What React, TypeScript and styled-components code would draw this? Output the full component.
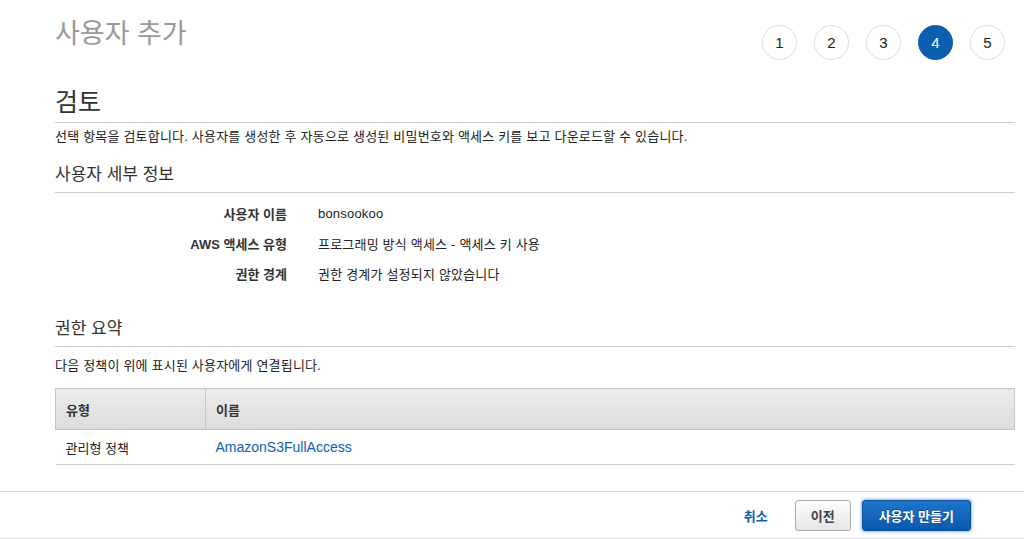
import React from 'react';
import styled, { createGlobalStyle } from 'styled-components';

const GlobalStyle = createGlobalStyle`
  html, body {
    margin: 0;
    padding: 0;
    background: #ffffff;
  }
  body {
    font-family: "Liberation Sans", "Noto Sans CJK KR", sans-serif;
    color: #222222;
    font-size: 13px;
  }
`;

const Page = styled.div`
  width: 1024px;
  display: flex;
  flex-direction: column;
`;

const Header = styled.div`
  height: 88px;
  display: flex;
  justify-content: space-between;
  align-items: flex-start;
  padding: 0 19px 0 55px;
`;

const PageTitle = styled.h1`
  margin: 18px 0 0;
  font-size: 27px;
  line-height: 32px;
  font-weight: 400;
  color: #999999;
`;

const Steps = styled.div`
  display: flex;
  gap: 17px;
  margin-top: 25px;
`;

const Step = styled.div<{ $active?: boolean }>`
  width: 35px;
  height: 35px;
  box-sizing: border-box;
  border-radius: 50%;
  border: 1px solid ${(p) => (p.$active ? '#0b5fb0' : '#dddddd')};
  background: ${(p) => (p.$active ? '#0b5fb0' : '#ffffff')};
  color: ${(p) => (p.$active ? '#ffffff' : '#222222')};
  display: flex;
  align-items: center;
  justify-content: center;
  font-size: 15px;
`;

const Content = styled.div`
  padding: 0 9px 0 55px;
  display: flex;
  flex-direction: column;
`;

const SectionTitle = styled.h2`
  margin: 0;
  font-size: 25px;
  line-height: 28px;
  font-weight: 400;
  color: #333333;
  padding-bottom: 6px;
  border-bottom: 1px solid #cccccc;
`;

const SubTitle = styled.h3<{ $top: number }>`
  margin: ${(p) => p.$top}px 0 0;
  font-size: 17px;
  line-height: 22px;
  font-weight: 400;
  color: #333333;
  padding-bottom: 6px;
  border-bottom: 1px solid #cccccc;
`;

const Description = styled.p<{ $top: number }>`
  margin: ${(p) => p.$top}px 0 0;
  font-size: 13px;
  line-height: 18px;
  color: #222222;
  letter-spacing: 0.2px;
`;

const DetailList = styled.dl`
  margin: 5px 0 0;
  display: grid;
  grid-template-columns: 232px 1fr;
  column-gap: 31px;
  grid-auto-rows: 30px;
  align-items: center;
`;

const DetailLabel = styled.dt`
  text-align: right;
  font-weight: 700;
  color: #333333;
`;

const DetailValue = styled.dd`
  margin: 0;
  color: #222222;
  letter-spacing: 0.2px;
`;

const Table = styled.table`
  margin-top: 13px;
  width: 100%;
  border-collapse: collapse;
`;

const HeadCell = styled.th<{ $width?: number }>`
  height: 41px;
  padding: 0 10px;
  text-align: left;
  font-weight: 700;
  color: #333333;
  background: linear-gradient(#ececec, #dcdcdc);
  border: 1px solid #c6c6c6;
  width: ${(p) => (p.$width ? `${p.$width}px` : 'auto')};
  box-sizing: border-box;
`;

const BodyCell = styled.td`
  height: 34px;
  padding: 0 10px;
  border-bottom: 1px solid #cccccc;
  color: #222222;
`;

const Link = styled.a`
  color: #0b62b8;
  text-decoration: none;
  font-size: 14px;
`;

const Footer = styled.div`
  margin-top: 26px;
  height: 46px;
  border-top: 1px solid #dddddd;
  border-bottom: 1px solid #dddddd;
  display: flex;
  align-items: center;
  justify-content: flex-end;
  padding-right: 53px;
`;

const CancelLink = styled.a`
  color: #0b5fae;
  font-weight: 700;
  font-size: 13px;
  margin-right: 27px;
`;

const Button = styled.button<{ $primary?: boolean }>`
  height: 31px;
  box-sizing: border-box;
  padding: 0 ${(p) => (p.$primary ? '16px' : '15px')};
  margin-left: ${(p) => (p.$primary ? '11px' : '0')};
  border-radius: 3px;
  font-family: "Liberation Sans", "Noto Sans CJK KR", sans-serif;
  font-size: 13px;
  font-weight: 700;
  color: ${(p) => (p.$primary ? '#ffffff' : '#444444')};
  border: 1px solid ${(p) => (p.$primary ? '#0b4f96' : '#a9a9a9')};
  background: ${(p) =>
    p.$primary ? 'linear-gradient(#1e75cc, #0a59ab)' : 'linear-gradient(#fdfdfd, #e6e6e6)'};
  box-shadow: ${(p) => (p.$primary ? '0 0 3px 1px #8fb8ec' : 'none')};
  text-shadow: ${(p) => (p.$primary ? '0 -1px 0 rgba(0, 0, 0, 0.35)' : 'none')};
`;

const details = [
  { label: '사용자 이름', value: 'bonsookoo' },
  { label: 'AWS 액세스 유형', value: '프로그래밍 방식 액세스 - 액세스 키 사용' },
  { label: '권한 경계', value: '권한 경계가 설정되지 않았습니다' },
];

const App = () => {
  return (
    <>
      <GlobalStyle />
      <Page>
        <Header>
          <PageTitle>사용자 추가</PageTitle>
          <Steps>
            {[1, 2, 3, 4, 5].map((n) => (
              <Step key={n} $active={n === 4}>
                {n}
              </Step>
            ))}
          </Steps>
        </Header>
        <Content>
          <SectionTitle>검토</SectionTitle>
          <Description $top={5}>
            선택 항목을 검토합니다. 사용자를 생성한 후 자동으로 생성된 비밀번호와 액세스 키를 보고 다운로드할 수 있습니다.
          </Description>

          <SubTitle $top={18}>사용자 세부 정보</SubTitle>
          <DetailList>
            {details.map((d) => (
              <React.Fragment key={d.label}>
                <DetailLabel>{d.label}</DetailLabel>
                <DetailValue>{d.value}</DetailValue>
              </React.Fragment>
            ))}
          </DetailList>

          <SubTitle $top={30}>권한 요약</SubTitle>
          <Description $top={10}>다음 정책이 위에 표시된 사용자에게 연결됩니다.</Description>
          <Table>
            <thead>
              <tr>
                <HeadCell $width={150}>유형</HeadCell>
                <HeadCell>이름</HeadCell>
              </tr>
            </thead>
            <tbody>
              <tr>
                <BodyCell>관리형 정책</BodyCell>
                <BodyCell>
                  <Link>AmazonS3FullAccess</Link>
                </BodyCell>
              </tr>
            </tbody>
          </Table>
        </Content>
        <Footer>
          <CancelLink>취소</CancelLink>
          <Button>이전</Button>
          <Button $primary>사용자 만들기</Button>
        </Footer>
      </Page>
    </>
  );
};

export default App;
